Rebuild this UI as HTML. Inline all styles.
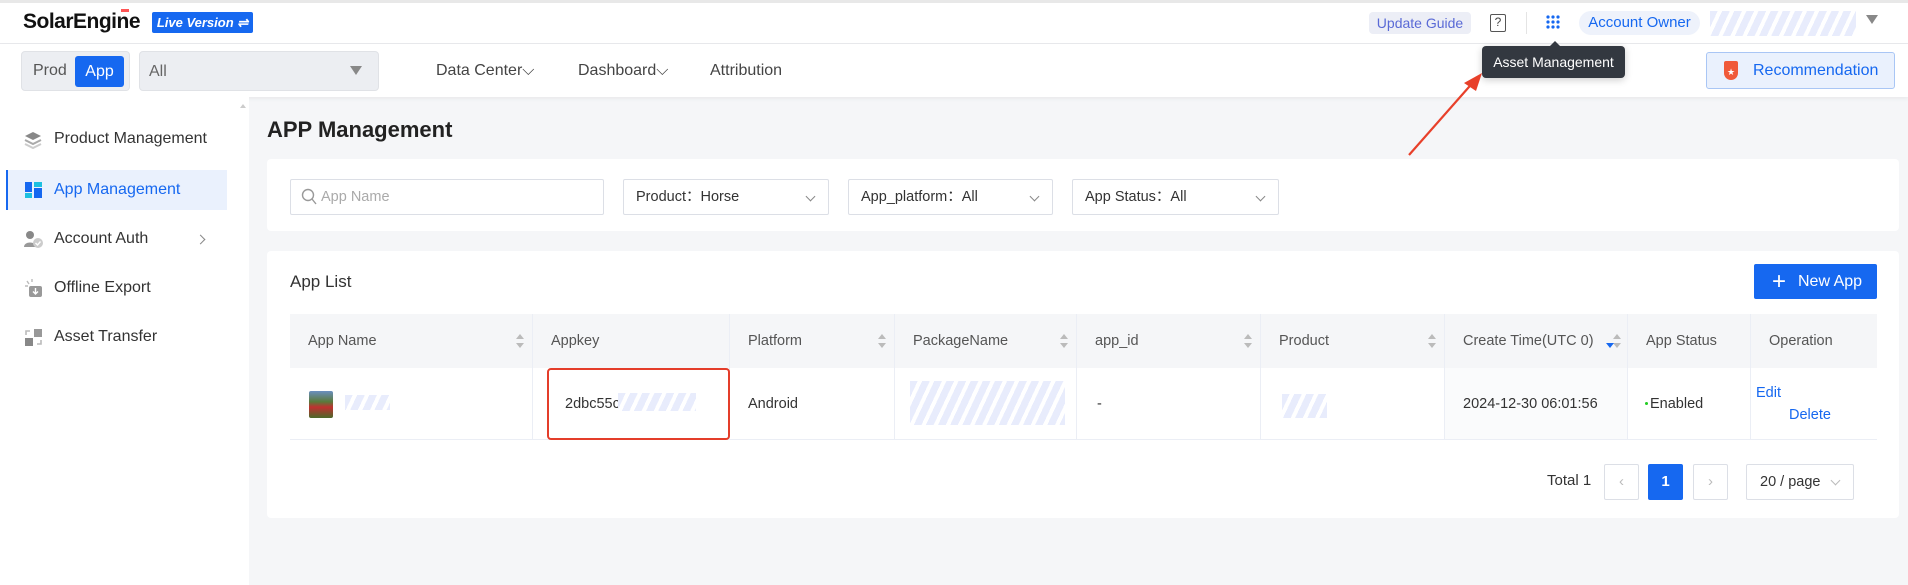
<!DOCTYPE html>
<html><head><meta charset="utf-8"><style>
*{box-sizing:border-box;margin:0;padding:0}
body{width:1908px;height:585px;overflow:hidden;background:#f5f6f8;font-family:"Liberation Sans",Arial,sans-serif;color:#333;position:relative;font-size:15px}
.a{position:absolute}
.hdr{left:0;top:0;width:1908px;height:44px;background:#fff;border-top:3px solid #e8e8e8;border-bottom:1px solid #e8e9ec}
.nav{left:0;top:44px;width:1908px;height:53px;background:#fff;box-shadow:0 2px 4px rgba(0,0,0,.05)}
.side{left:0;top:97px;width:249px;height:488px;background:#fff}
.card{background:#fff;border-radius:4px}
.sel{background:#fff;border:1px solid #dcdfe6;border-radius:2px;height:36px;line-height:34px;padding-left:12px;font-size:14.5px;color:#333}
.chev{position:absolute;right:14px;top:13px;width:7px;height:7px;border-right:1.2px solid #888;border-bottom:1.2px solid #888;transform:rotate(45deg)}
.th{top:314px;height:54px;line-height:54px;background:#f5f6f8;color:#555;font-size:14.5px;padding-left:18px;border-right:1px solid #ebeef5}
.td{top:368px;height:72px;line-height:72px;font-size:14.5px;padding-left:18px;border-right:1px solid #ebeef5;border-bottom:1px solid #ebeef5;background:#fff}
.sort{position:absolute;right:12px;top:20px;width:0;height:0}
.sort:before{content:"";position:absolute;left:-4px;top:0;border:4px solid transparent;border-bottom:5px solid #bbb;border-top:0}
.sort:after{content:"";position:absolute;left:-4px;top:9px;border:4px solid transparent;border-top:5px solid #bbb;border-bottom:0}
.hatch{background:repeating-linear-gradient(115deg,#e8ecfc 0 7px,#fff 7px 11px)}
.mi{left:54px;font-size:16px;color:#333}
</style></head><body>
<div class="a hdr"></div>
<div class="a" style="left:23px;top:10px;font-size:21px;font-weight:bold;color:#111;letter-spacing:-0.5px">SolarEngine</div>
<div class="a" style="left:121px;top:9px;width:8px;height:3px;background:#f55"></div>
<div class="a" style="left:152px;top:12px;width:101px;height:21px;background:#1668f0;color:#fff;font-size:13px;font-weight:bold;font-style:italic;line-height:21px;text-align:center;border-radius:2px">Live Version ⇌</div>
<div class="a" style="left:1369px;top:12px;width:102px;height:22px;background:#eceef6;border-radius:4px;color:#5a6ad6;font-size:14px;line-height:22px;text-align:center">Update Guide</div>
<div class="a" style="left:1490px;top:14px;width:16px;height:18px;border:1.5px solid #555;border-radius:2px;font-size:12px;line-height:15px;text-align:center;color:#444">?</div>
<div class="a" style="left:1526px;top:12px;width:1px;height:22px;background:#e4e4e4"></div>
<svg class="a" style="left:1545px;top:14px" width="16" height="16"><g fill="#1668f0"><circle cx="3" cy="3" r="1.6"/><circle cx="8" cy="3" r="1.6"/><circle cx="13" cy="3" r="1.6"/><circle cx="3" cy="8" r="1.6"/><circle cx="8" cy="8" r="1.6"/><circle cx="13" cy="8" r="1.6"/><circle cx="3" cy="13" r="1.6"/><circle cx="8" cy="13" r="1.6"/><circle cx="13" cy="13" r="1.6"/></g></svg>
<div class="a" style="left:1579px;top:11px;width:121px;height:24px;background:#eef2fb;border-radius:12px;color:#1668f0;font-size:15px;line-height:24px;text-align:center">Account Owner</div>
<div class="a hatch" style="left:1710px;top:11px;width:146px;height:25px"></div>
<div class="a" style="left:1866px;top:15px;border:6px solid transparent;border-top:9px solid #888"></div>

<div class="a nav"></div>
<div class="a" style="left:21px;top:51px;width:109px;height:40px;background:#eceef2;border-radius:4px;border:1px solid #e0e2e6"></div>
<div class="a" style="left:33px;top:62px;font-size:16px;color:#555">Prod</div>
<div class="a" style="left:75px;top:56px;width:49px;height:31px;background:#1668f0;border-radius:3px;color:#fff;font-size:16px;line-height:31px;text-align:center">App</div>
<div class="a" style="left:139px;top:51px;width:240px;height:40px;background:#eceef2;border-radius:4px;border:1px solid #e0e2e6;padding:11px 9px;font-size:16px;color:#666">All</div>
<div class="a" style="left:350px;top:66px;border:6px solid transparent;border-top:9px solid #888"></div>
<div class="a" style="left:436px;top:62px;font-size:16px;color:#444">Data Center⌵</div>
<div class="a" style="left:578px;top:62px;font-size:16px;color:#444">Dashboard⌵</div>
<div class="a" style="left:710px;top:62px;font-size:16px;color:#444">Attribution</div>
<div class="a" style="left:1706px;top:52px;width:189px;height:37px;background:#eaf1fd;border:1px solid #a9c6f5;border-radius:3px;color:#1668f0;font-size:16px;line-height:35px;padding-left:46px">Recommendation</div>
<div class="a" style="left:1724px;top:61px;width:14px;height:19px;background:#f05a3a;border-radius:2px 2px 7px 7px"><div style="color:#fff;font-size:9px;text-align:center;line-height:22px">★</div></div>
<div class="a" style="left:1482px;top:46px;width:143px;height:32px;background:#333840;border-radius:4px;color:#fff;font-size:14px;line-height:32px;text-align:center;box-shadow:0 2px 8px rgba(0,0,0,.2)">Asset Management</div>
<div class="a" style="left:1550px;top:41px;border:5px solid transparent;border-bottom:5px solid #333840;border-top:0"></div>
<svg class="a" style="left:1400px;top:65px" width="90" height="95"><line x1="9" y1="90" x2="76" y2="14" stroke="#e8402a" stroke-width="2.2"/><polygon points="82,8 64,18 76,26" fill="#e8402a"/></svg>

<div class="a side"></div>
<div class="a" style="left:240px;top:101px;border:3px solid transparent;border-bottom:4px solid #ccc"></div>
<svg class="a" style="left:24px;top:131px" width="18" height="18"><path d="M9 1L17 5L9 9L1 5Z" fill="#888"/><path d="M1 9L9 13L17 9" stroke="#aaa" stroke-width="2" fill="none"/><path d="M1 13L9 17L17 13" stroke="#ccc" stroke-width="2" fill="none"/></svg>
<div class="a mi" style="top:130px">Product Management</div>
<div class="a" style="left:6px;top:170px;width:221px;height:40px;background:#eaf1fd;border-left:2px solid #1668f0"></div>
<svg class="a" style="left:25px;top:182px" width="17" height="16"><rect x="0" y="0" width="7" height="10" fill="#1668f0"/><rect x="0" y="11" width="7" height="5" fill="#1ec0e0"/><rect x="9" y="0" width="8" height="5" fill="#1ec0e0"/><rect x="9" y="6" width="8" height="10" fill="#1668f0"/></svg>
<div class="a mi" style="top:181px;color:#1668f0">App Management</div>
<svg class="a" style="left:24px;top:230px" width="19" height="18"><circle cx="6" cy="5" r="4" fill="#888"/><path d="M0 17C0 11 12 11 12 17Z" fill="#999"/><circle cx="14" cy="13" r="5" fill="#ccc"/><path d="M11.5 13l2 2 3-3.5" stroke="#fff" stroke-width="1.4" fill="none"/></svg>
<div class="a mi" style="top:230px">Account Auth</div>
<div class="a" style="left:197px;top:236px;width:7px;height:7px;border-right:1.3px solid #888;border-top:1.3px solid #888;transform:rotate(45deg)"></div>
<svg class="a" style="left:24px;top:279px" width="19" height="19"><path d="M3 2l2 3M8 0v3M1 7h3" stroke="#bbb" stroke-width="1.4"/><rect x="5" y="7" width="13" height="11" rx="2" fill="#999"/><path d="M11.5 9v6M9 12.5l2.5 2.5 2.5-2.5" stroke="#fff" stroke-width="1.4" fill="none"/></svg>
<div class="a mi" style="top:279px">Offline Export</div>
<svg class="a" style="left:24px;top:328px" width="19" height="19"><rect x="10" y="1" width="8" height="8" fill="#999"/><rect x="1" y="10" width="8" height="8" fill="#888"/><path d="M2 7V3h4M17 12v4h-4" stroke="#bbb" stroke-width="1.6" fill="none"/></svg>
<div class="a mi" style="top:328px">Asset Transfer</div>

<div class="a" style="left:267px;top:117px;font-size:22px;font-weight:bold;color:#222">APP Management</div>
<div class="a card" style="left:267px;top:159px;width:1632px;height:72px"></div>
<div class="a sel" style="left:290px;top:179px;width:314px;color:#aaa;padding-left:30px">App Name</div>
<svg class="a" style="left:301px;top:188px" width="16" height="17"><circle cx="7" cy="7" r="5.5" stroke="#999" stroke-width="1.4" fill="none"/><path d="M11 11l4 5" stroke="#999" stroke-width="1.4"/></svg>
<div class="a sel" style="left:623px;top:179px;width:206px">Product：Horse<span class="chev"></span></div>
<div class="a sel" style="left:848px;top:179px;width:205px">App_platform：All<span class="chev"></span></div>
<div class="a sel" style="left:1072px;top:179px;width:207px">App Status：All<span class="chev"></span></div>

<div class="a card" style="left:267px;top:251px;width:1632px;height:267px"></div>
<div class="a" style="left:290px;top:272px;font-size:17px;color:#333">App List</div>
<div class="a" style="left:1754px;top:264px;width:123px;height:35px;background:#1668f0;border-radius:2px;color:#fff;font-size:16px;line-height:35px;padding-left:44px">New App</div>
<div class="a" style="left:1772px;top:273px;color:#fff;font-size:24px;line-height:17px;font-weight:300">+</div>

<div class="a th" style="left:290px;width:243px">App Name<span class="sort"></span></div>
<div class="a th" style="left:533px;width:197px">Appkey</div>
<div class="a th" style="left:730px;width:165px">Platform<span class="sort"></span></div>
<div class="a th" style="left:895px;width:182px">PackageName<span class="sort"></span></div>
<div class="a th" style="left:1077px;width:184px">app_id<span class="sort"></span></div>
<div class="a th" style="left:1261px;width:184px">Product<span class="sort"></span></div>
<div class="a th" style="left:1445px;width:183px;padding-left:18px;white-space:nowrap">Create Time(UTC 0)<span class="sort" style="right:10px"></span></div>
<div class="a" style="left:1606px;top:343px;border:4px solid transparent;border-top:5px solid #1668f0;border-bottom:0"></div>
<div class="a th" style="left:1628px;width:123px">App Status</div>
<div class="a th" style="left:1751px;width:126px;border-right:0">Operation</div>

<div class="a td" style="left:290px;width:243px"></div>
<div class="a" style="left:309px;top:391px;width:24px;height:27px;background:linear-gradient(#6a8fc0,#5a7a3a 40%,#c03030 60%,#4a6a2a);border-radius:2px"></div>
<div class="a hatch" style="left:345px;top:395px;width:45px;height:15px"></div>
<div class="a td" style="left:533px;width:197px;padding-left:32px">2dbc55c</div>
<div class="a hatch" style="left:618px;top:393px;width:78px;height:18px"></div>
<div class="a" style="left:547px;top:368px;width:183px;height:72px;border:2px solid #e43d2a;border-radius:4px"></div>
<div class="a td" style="left:730px;width:165px">Android</div>
<div class="a td" style="left:895px;width:182px"></div>
<div class="a hatch" style="left:910px;top:381px;width:155px;height:44px"></div>
<div class="a td" style="left:1077px;width:184px;padding-left:20px">-</div>
<div class="a td" style="left:1261px;width:184px"></div>
<div class="a hatch" style="left:1282px;top:394px;width:45px;height:24px"></div>
<div class="a td" style="left:1445px;width:183px;background:#fafbfc;padding-left:18px">2024-12-30 06:01:56</div>
<div class="a td" style="left:1628px;width:123px;padding-left:22px">Enabled</div>
<div class="a" style="left:1645px;top:402px;width:3px;height:3px;background:#2c2;border-radius:50%"></div>
<div class="a td" style="left:1751px;width:126px;border-right:0"></div>
<div class="a" style="left:1756px;top:385px;color:#1668f0;font-size:14.5px">Edit</div>
<div class="a" style="left:1789px;top:407px;color:#1668f0;font-size:14.5px">Delete</div>

<div class="a" style="left:1547px;top:472px;font-size:15px;color:#333">Total 1</div>
<div class="a" style="left:1604px;top:464px;width:35px;height:36px;border:1px solid #dcdfe6;border-radius:2px;color:#bbb;text-align:center;line-height:34px">‹</div>
<div class="a" style="left:1648px;top:464px;width:35px;height:36px;background:#1668f0;border-radius:2px;color:#fff;text-align:center;line-height:36px;font-weight:bold">1</div>
<div class="a" style="left:1693px;top:464px;width:35px;height:36px;border:1px solid #dcdfe6;border-radius:2px;color:#bbb;text-align:center;line-height:34px">›</div>
<div class="a" style="left:1746px;top:464px;width:108px;height:36px;border:1px solid #dcdfe6;border-radius:2px;font-size:14.5px;line-height:34px;padding-left:13px">20 / page<span class="chev" style="top:12px;border-color:#bbb"></span></div>
</body></html>
